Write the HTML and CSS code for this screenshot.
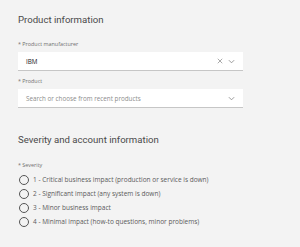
FILE: index.html
```html
<!DOCTYPE html>
<html lang="en">
<head>
    <meta charset="UTF-8">
    <title>Support case</title>
    <link rel="stylesheet" href="styles.css">
</head>
<body>
    <div class="form">
        <h2 class="section-title first">Product information</h2>

        <div class="field">
            <label class="label">* Product manufacturer</label>
            <div class="combo">
                <span class="value">IBM</span>
                <span class="icons">
                    <svg width="6" height="6" viewBox="0 0 8 8"><path d="M1 1 L7 7 M7 1 L1 7" stroke="#8d8d8d" stroke-width="1" fill="none"/></svg>
                    <svg width="7" height="5" viewBox="0 0 8 5"><path d="M1 1 L4 4 L7 1" stroke="#8d8d8d" stroke-width="1" fill="none"/></svg>
                </span>
            </div>
        </div>

        <div class="field">
            <label class="label">* Product</label>
            <div class="combo">
                <span class="placeholder">Search or choose from recent products</span>
                <span class="icons">
                    <svg width="7" height="5" viewBox="0 0 8 5"><path d="M1 1 L4 4 L7 1" stroke="#8d8d8d" stroke-width="1" fill="none"/></svg>
                </span>
            </div>
        </div>

        <h2 class="section-title">Severity and account information</h2>

        <div class="field">
            <label class="label">* Severity</label>
            <div class="radios">
                <div class="radio"><span class="circle"></span>1 - Critical business impact (production or service is down)</div>
                <div class="radio"><span class="circle"></span>2 - Significant impact (any system is down)</div>
                <div class="radio"><span class="circle"></span>3 - Minor business impact</div>
                <div class="radio"><span class="circle"></span>4 - Minimal impact (how-to questions, minor problems)</div>
            </div>
        </div>
    </div>
</body>
</html>
```

FILE: styles.css
```css
body {
    margin: 0;
    background-color: #f3f3f3;
    font-family: "Open Sans", Arial, sans-serif;
    color: #161616;
}

.form {
    width: 225px;
    padding: 13px 0 0 18px;
}

.section-title {
    font-family: Roboto, Arial, sans-serif;
    font-size: 9.6px;
    font-weight: 400;
    color: #4a4a4a;
    margin: 0 0 13px 0;
    line-height: 14px;
}

.section-title:not(.first) {
    margin-top: 25px;
    margin-bottom: 14px;
}

.field {
    margin-bottom: 6px;
}

.label {
    display: block;
    font-size: 5.4px;
    color: #6f6f6f;
    line-height: 8px;
    margin-bottom: 4px;
}

.combo {
    display: flex;
    align-items: center;
    height: 18px;
    background-color: #fff;
    border-bottom: 1px solid #c6c6c6;
    padding: 0 8px;
    font-size: 6.3px;
}

.value {
    flex: 1;
    color: #161616;
}

.placeholder {
    flex: 1;
    color: #8d8d8d;
}

.icons {
    display: flex;
    align-items: center;
    gap: 5px;
}

.radios {
    display: flex;
    flex-direction: column;
    margin-top: 3px;
}

.radio {
    display: flex;
    align-items: center;
    font-size: 6.5px;
    color: #5a5a5a;
    line-height: 14px;
}

.circle {
    width: 8px;
    height: 8px;
    border: 1px solid #555555;
    border-radius: 50%;
    margin: 0 4px 0 1px;
    flex-shrink: 0;
}
```
